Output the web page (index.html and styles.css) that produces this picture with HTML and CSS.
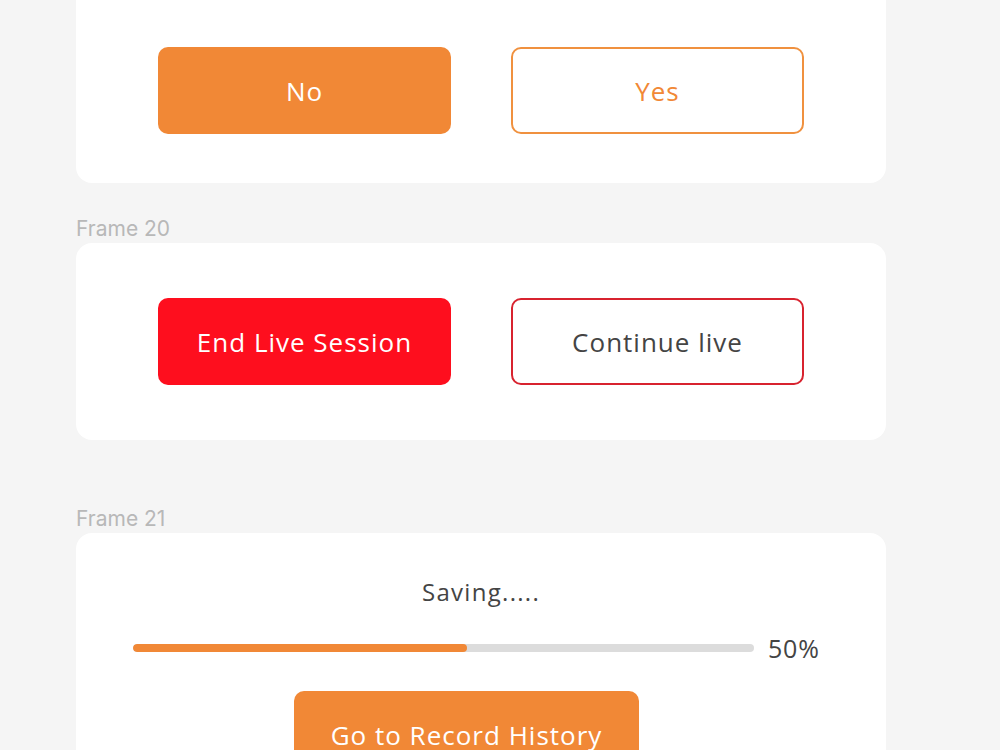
FILE: index.html
```html
<!DOCTYPE html>
<html lang="en">
<head>
  <meta charset="UTF-8">
  <title>Frames</title>
  <link rel="stylesheet" href="styles.css">
</head>
<body>

  <div class="page">

    <div class="card card-confirm">
      <p class="question">Do you want to stop recording?</p>
      <div class="btn-row">
        <button class="btn btn-orange">No</button>
        <button class="btn btn-orange-outline">Yes</button>
      </div>
    </div>

    <div class="frame-label">Frame 20</div>
    <div class="card card-live">
      <div class="btn-row">
        <button class="btn btn-red">End Live Session</button>
        <button class="btn btn-red-outline">Continue live</button>
      </div>
    </div>

    <div class="frame-label label-21">Frame 21</div>
    <div class="card card-saving">
      <p class="saving">Saving.....</p>
      <div class="progress-row">
        <div class="progress">
          <div class="progress-fill" style="width: 53.8%"></div>
        </div>
        <span class="percent">50%</span>
      </div>
      <button class="btn btn-orange btn-history">Go to Record History</button>
    </div>

  </div>

</body>
</html>
```

FILE: styles.css
```css
body {
  background-color: #f5f5f5;
  font-family: "Open Sans", "Liberation Sans", sans-serif;
  margin: 0;
  padding: 0;
  overflow: hidden;
}

.page {
  width: 810px;
  margin-left: 76px;
  margin-top: -79px;
}

.card {
  background: white;
  border-radius: 16px;
}

.card-confirm {
  padding: 40px 0 49px;
}

.question {
  margin: 0 0 48px;
  text-align: center;
  font-size: 24px;
  line-height: 38px;
  letter-spacing: 1px;
  color: #444;
}

.card-live {
  padding: 55px 0 55px;
}

.btn-row {
  display: flex;
  justify-content: center;
  gap: 60px;
}

.btn {
  width: 293px;
  height: 87px;
  border-radius: 10px;
  font-family: "Open Sans", "Liberation Sans", sans-serif;
  font-size: 26px;
  letter-spacing: 1px;
  border: none;
  cursor: pointer;
  box-sizing: border-box;
}

.btn-orange {
  background-color: #f18836;
  color: white;
}

.btn-orange-outline {
  background-color: white;
  border: 2px solid #f0913f;
  color: #f18836;
}

.btn-red {
  background-color: #fe0e1e;
  color: white;
}

.btn-red-outline {
  background-color: white;
  border: 2px solid #d8232f;
  color: #444;
}

.frame-label {
  margin: 34px 0 2px;
  font-family: Inter, "Liberation Sans", sans-serif;
  font-size: 21px;
  line-height: 24px;
  color: #b8b8b8;
}

.label-21 {
  margin-top: 67px;
}

.card-saving {
  padding: 40px 0 40px 57px;
  height: 300px;
}

.saving {
  margin: 0 57px 0 0;
  text-align: center;
  font-size: 24px;
  line-height: 38px;
  letter-spacing: 1.3px;
  color: #444;
}

.progress-row {
  display: flex;
  align-items: center;
  gap: 14px;
  margin-top: 22px;
}

.progress {
  width: 621px;
  height: 8px;
  border-radius: 4px;
  background-color: #dcdcdc;
  overflow: hidden;
}

.progress-fill {
  height: 100%;
  background-color: #f18836;
  border-radius: 4px;
}

.percent {
  font-size: 25px;
  line-height: 30px;
  letter-spacing: 0.8px;
  color: #444;
}

.btn-history {
  display: block;
  width: 345px;
  margin: 28px 0 0 161px;
}
```
